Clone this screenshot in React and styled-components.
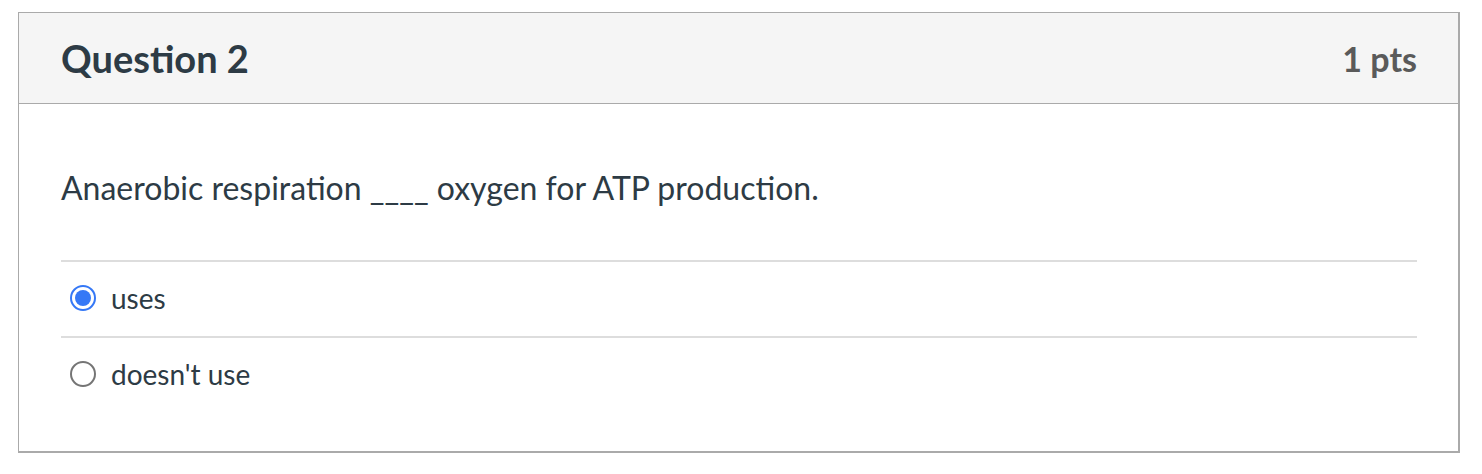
import React from "react";
import styled, { createGlobalStyle } from "styled-components";

const Global = createGlobalStyle`
  html, body { margin: 0; padding: 0; background: #ffffff; }
  body { font-family: Lato, "Noto Sans", sans-serif; color: #2d3b45; }
`;

const Page = styled.div`
  padding: 12px 22px 20px 18px;
`;

const Card = styled.section`
  border: 1px solid #aaaaaa;
  border-right-width: 2px;
  border-bottom-width: 2px;
  background: #ffffff;
`;

const Header = styled.header`
  display: flex;
  align-items: center;
  justify-content: space-between;
  height: 90px;
  padding: 0 41px 0 42px;
  background: #f5f5f5;
  border-bottom: 1px solid #aaaaaa;
`;

const Title = styled.h2`
  margin: 0;
  font-size: 38px;
  font-weight: 700;
  color: #2d3b45;
`;

const Points = styled.div`
  font-size: 34px;
  font-weight: 700;
  color: #5a5a5a;
`;

const Body = styled.div`
  padding: 60px 41px 39px 42px;
`;

const Prompt = styled.p`
  margin: 0 0 48px;
  font-size: 32px;
  line-height: 48px;
`;

const Answers = styled.div`
  display: flex;
  flex-direction: column;
`;

const Answer = styled.label`
  display: flex;
  align-items: center;
  gap: 15px;
  height: 76px;
  padding: 0 0 3px 9px;
  border-top: ${(p) => (p.$divider ? "2px solid #dddddd" : "none")};
  font-size: 28px;
  color: #2d3b45;
  box-sizing: border-box;
`;

const Radio = styled.span`
  position: relative;
  width: 26px;
  height: 26px;
  box-sizing: border-box;
  border-radius: 50%;
  border: 2px solid ${(p) => (p.$checked ? "#3578f6" : "#757575")};
  background: #ffffff;
  flex: none;
  &::after {
    content: "";
    position: absolute;
    inset: 3px;
    border-radius: 50%;
    background: ${(p) => (p.$checked ? "#3578f6" : "transparent")};
  }
`;

const answers = [
  { text: "uses", checked: true },
  { text: "doesn't use", checked: false },
];

export default function App() {
  return (
    <>
      <Global />
      <Page>
        <Card>
          <Header>
            <Title>Question 2</Title>
            <Points>1 pts</Points>
          </Header>
          <Body>
            <Prompt>Anaerobic respiration ____ oxygen for ATP production.</Prompt>
            <Answers>
              {answers.map((a) => (
                <Answer key={a.text} $divider>
                  <Radio $checked={a.checked} />
                  {a.text}
                </Answer>
              ))}
            </Answers>
          </Body>
        </Card>
      </Page>
    </>
  );
}
